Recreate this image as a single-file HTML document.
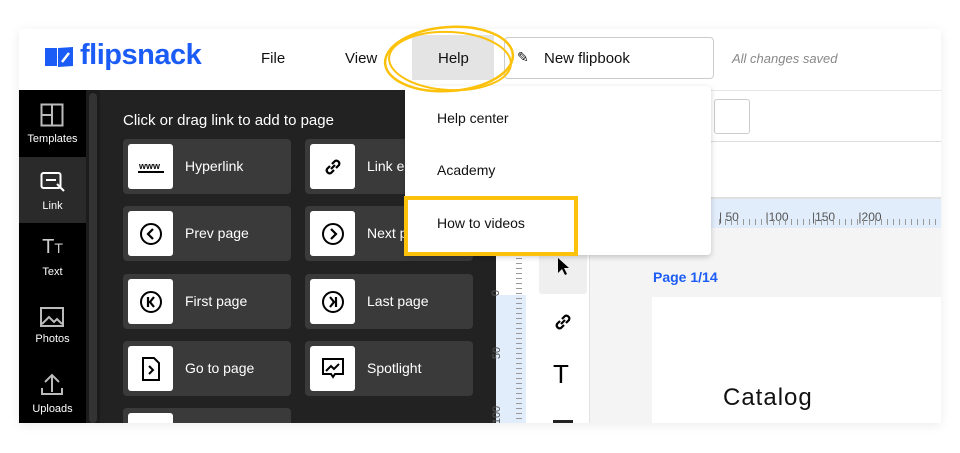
<!DOCTYPE html>
<html><head><meta charset="utf-8"><style>
*{box-sizing:border-box;margin:0;padding:0}
body{width:960px;height:453px;background:#fff;position:relative;overflow:hidden;font-family:"Liberation Sans",Arial,sans-serif}
.a{position:absolute}
.frame{left:19px;top:29px;width:922px;height:394px;background:#f4f4f4;overflow:hidden;box-shadow:0 2px 10px rgba(0,0,0,.08)}
.card{position:absolute;width:168px;height:55px;background:#3a3a3a;border-radius:4px}
.card .ic{position:absolute;left:5px;top:5px;width:45px;height:45px;background:#fff;border-radius:3px;display:flex;align-items:center;justify-content:center}
.card span{position:absolute;left:62px;top:19px;color:#fff;font-size:14px}
.side{color:#fff;font-size:11px;text-align:center;width:67px;position:absolute;left:0}
.dd{font-size:14px;color:#111;position:absolute;left:32px}
</style></head><body>
<div class="a frame">
 <div class="a" style="left:0;top:0;width:922px;height:61px;background:#fff"></div>
 <svg class="a" style="left:25px;top:16px" width="32" height="24" viewBox="0 0 32 24"><path d="M1 3h12v18H1z" fill="#1a5cf5"/><path d="M14 3l15-1v19l-15 1z" fill="#1a5cf5"/><path d="M18 17l7-9" stroke="#fff" stroke-width="2.5"/></svg>
 <div class="a" style="left:61px;top:10px;font-size:29px;font-weight:bold;color:#1a5cf5;letter-spacing:-0.5px">flipsnack</div>
 <div class="a" style="left:242px;top:21px;font-size:15px;color:#111">File</div>
 <div class="a" style="left:326px;top:21px;font-size:15px;color:#111">View</div>
 <div class="a" style="left:393px;top:6px;width:82px;height:45px;background:#e4e4e4"></div>
 <div class="a" style="left:419px;top:21px;font-size:15px;color:#111">Help</div>
 <div class="a" style="left:485px;top:8px;width:210px;height:42px;border:1px solid #ccc;border-radius:4px;background:#fff"></div>
 <div class="a" style="left:498px;top:20px;font-size:14px;color:#111">✎</div>
 <div class="a" style="left:525px;top:21px;font-size:15px;color:#111">New flipbook</div>
 <div class="a" style="left:713px;top:22px;font-size:13px;color:#888;font-style:italic">All changes saved</div>
 <div class="a" style="left:477px;top:61px;width:445px;height:52px;background:#fff;border-top:1px solid #e6e6e6;border-bottom:1px solid #ddd"></div>
 <div class="a" style="left:695px;top:70px;width:36px;height:35px;border:1px solid #ccc;border-radius:3px;background:#fff"></div>
 <div class="a" style="left:477px;top:113px;width:445px;height:57px;background:#fff;border-bottom:2px solid #e0e0e0"></div>
 <div class="a" style="left:477px;top:170px;width:445px;height:29px;background:#e2edfb"></div>
 <div class="a" style="left:700px;top:181px;font-size:12px;color:#555">|&nbsp;50&nbsp;&nbsp;&nbsp;&nbsp;&nbsp;&nbsp;&nbsp;&nbsp;|100&nbsp;&nbsp;&nbsp;&nbsp;&nbsp;&nbsp;&nbsp;|150&nbsp;&nbsp;&nbsp;&nbsp;&nbsp;&nbsp;&nbsp;|200</div>
 <div class="a" style="left:700px;top:190px;width:222px;height:6px;background:repeating-linear-gradient(90deg,#999 0 1px,transparent 1px 6px)"></div>
 <div class="a" style="left:0;top:61px;width:67px;height:333px;background:#000"></div>
 <div class="a" style="left:0;top:128px;width:67px;height:66px;background:#2a2a2a"></div>
 <svg class="a" style="left:21px;top:74px" width="24" height="24"><rect x="1.5" y="1.5" width="21" height="21" fill="none" stroke="#bbb" stroke-width="2"/><path d="M12 1.5v21M1.5 12h10.5" stroke="#bbb" stroke-width="2"/></svg>
 <div class="side" style="top:104px">Templates</div>
 <svg class="a" style="left:21px;top:142px" width="26" height="24"><rect x="1.5" y="2" width="19" height="15" rx="2" fill="none" stroke="#fff" stroke-width="2"/><path d="M6 9h10" stroke="#fff" stroke-width="2"/><path d="M17 13l7 7" stroke="#fff" stroke-width="2"/></svg>
 <div class="side" style="top:171px">Link</div>
 <div class="side" style="top:207px;font-size:20px;color:#ccc">T<span style="font-size:14px">T</span></div>
 <div class="side" style="top:237px">Text</div>
 <svg class="a" style="left:21px;top:278px" width="24" height="20"><rect x="1" y="1" width="22" height="18" fill="none" stroke="#bbb" stroke-width="2"/><path d="M2 17l7-7 5 5 3-3 5 5" stroke="#bbb" stroke-width="2" fill="none"/></svg>
 <div class="side" style="top:304px">Photos</div>
 <svg class="a" style="left:21px;top:343px" width="24" height="24"><path d="M12 20V3M5 10l7-7 7 7M2 16v6h20v-6" stroke="#bbb" stroke-width="2" fill="none"/></svg>
 <div class="side" style="top:374px">Uploads</div>
 <div class="a" style="left:67px;top:61px;width:14px;height:333px;background:#1c1c1c"></div>
 <div class="a" style="left:70px;top:64px;width:8px;height:330px;background:#333;border-radius:4px"></div>
 <div class="a" style="left:81px;top:61px;width:396px;height:333px;background:#222"></div>
 <div class="a" style="left:104px;top:83px;font-size:15px;color:#fff">Click or drag link to add to page</div>
 <div class="a" style="left:104px;top:110px;width:380px;height:300px">
  <div class="card" style="left:0;top:0"><div class="ic"><svg width="28" height="14"><text x="2" y="9" font-size="9" font-family="Liberation Sans" font-weight="bold">www</text><path d="M1 12h26" stroke="#000" stroke-width="2"/></svg></div><span>Hyperlink</span></div>
  <div class="card" style="left:182px;top:0"><div class="ic"><svg width="22" height="22"><path d="M9 13l4-4M8 10l-3 3a3 3 0 004 4l3-3M14 12l3-3a3 3 0 00-4-4l-3 3" stroke="#000" stroke-width="2.2" fill="none"/></svg></div><span>Link el</span></div>
  <div class="card" style="left:0;top:67px"><div class="ic"><svg width="24" height="24"><circle cx="12" cy="12" r="10" fill="none" stroke="#000" stroke-width="2"/><path d="M14 7l-5 5 5 5" stroke="#000" stroke-width="2.2" fill="none"/></svg></div><span>Prev page</span></div>
  <div class="card" style="left:182px;top:67px"><div class="ic"><svg width="24" height="24"><circle cx="12" cy="12" r="10" fill="none" stroke="#000" stroke-width="2"/><path d="M10 7l5 5-5 5" stroke="#000" stroke-width="2.2" fill="none"/></svg></div><span>Next p</span></div>
  <div class="card" style="left:0;top:135px"><div class="ic"><svg width="24" height="24"><circle cx="12" cy="12" r="10" fill="none" stroke="#000" stroke-width="2"/><path d="M9 7v10M15 7l-4 5 4 5" stroke="#000" stroke-width="2.2" fill="none"/></svg></div><span>First page</span></div>
  <div class="card" style="left:182px;top:135px"><div class="ic"><svg width="24" height="24"><circle cx="12" cy="12" r="10" fill="none" stroke="#000" stroke-width="2"/><path d="M15 7v10M9 7l4 5-4 5" stroke="#000" stroke-width="2.2" fill="none"/></svg></div><span>Last page</span></div>
  <div class="card" style="left:0;top:202px"><div class="ic"><svg width="20" height="24"><path d="M2 1h11l5 5v17H2z" fill="none" stroke="#000" stroke-width="2"/><path d="M8 9l4 4-4 4" stroke="#000" stroke-width="2" fill="none"/></svg></div><span>Go to page</span></div>
  <div class="card" style="left:182px;top:202px"><div class="ic"><svg width="24" height="24"><path d="M2 2h20v15h-8l-2 3-2-3H2z" fill="none" stroke="#000" stroke-width="2"/><path d="M5 14l5-5 3 3 5-5" stroke="#000" stroke-width="2" fill="none"/></svg></div><span>Spotlight</span></div>
  <div class="card" style="left:0;top:269px"><div class="ic"></div></div>
 </div>
 <div class="a" style="left:477px;top:199px;width:30px;height:195px;background:#fff"></div>
 <div class="a" style="left:477px;top:266px;width:30px;height:128px;background:#e2edfb"></div>
 <div class="a" style="left:497px;top:199px;width:6px;height:195px;background:repeating-linear-gradient(180deg,#999 0 1px,transparent 1px 5px)"></div>
 <div class="a" style="left:474px;top:258px;font-size:11px;color:#555;transform:rotate(-90deg)">0</div>
 <div class="a" style="left:472px;top:318px;font-size:11px;color:#555;transform:rotate(-90deg)">50</div>
 <div class="a" style="left:469px;top:380px;font-size:11px;color:#555;transform:rotate(-90deg)">100</div>
 <div class="a" style="left:507px;top:199px;width:64px;height:195px;background:#fff;border-right:1px solid #e3e3e3"></div>
 <div class="a" style="left:520px;top:217px;width:48px;height:48px;background:#efefef;border-radius:3px"></div>
 <svg class="a" style="left:537px;top:228px" width="14" height="20"><path d="M2 1v15l4-4 3 6 2-1-3-6h5z" fill="#000"/></svg>
 <svg class="a" style="left:533px;top:282px" width="22" height="22"><path d="M9 13l4-4M8 10l-3 3a3 3 0 004 4l3-3M14 12l3-3a3 3 0 00-4-4l-3 3" stroke="#000" stroke-width="2.2" fill="none"/></svg>
 <div class="a" style="left:534px;top:330px;font-size:26px;color:#000">T</div>
 <div class="a" style="left:534px;top:391px;width:20px;height:3px;background:#222"></div>
 <div class="a" style="left:634px;top:240px;font-size:14px;font-weight:bold;color:#1a5cf5">Page 1/14</div>
 <div class="a" style="left:633px;top:268px;width:289px;height:126px;background:#fff"></div>
 <div class="a" style="left:704px;top:355px;font-size:24px;color:#111;letter-spacing:1px">Catalog</div>
</div>
<div class="a" style="left:405px;top:86px;width:306px;height:169px;background:#fff;border-radius:4px;box-shadow:0 2px 6px rgba(0,0,0,.2)">
 <div class="dd" style="top:24px">Help center</div>
 <div class="dd" style="top:76px">Academy</div>
 <div class="dd" style="top:129px">How to videos</div>
</div>
<div class="a" style="left:404px;top:196px;width:174px;height:60px;border:4px solid #fcc10a"></div>
<svg class="a" style="left:378px;top:22px" width="144" height="80"><ellipse cx="71" cy="37" rx="64" ry="32" fill="none" stroke="#fcc10a" stroke-width="2.5" transform="rotate(-4 71 37)"/><ellipse cx="72" cy="39" rx="61" ry="29" fill="none" stroke="#fcc10a" stroke-width="2" transform="rotate(3 72 39)"/></svg>
</body></html>
